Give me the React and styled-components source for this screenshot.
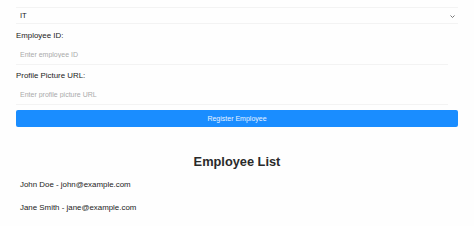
import React from "react";
import styled, { createGlobalStyle } from "styled-components";

const GlobalStyle = createGlobalStyle`
  * { box-sizing: border-box; }
  body {
    margin: 0;
    background: #fefefe;
    font-family: "Liberation Sans", Arial, sans-serif;
    color: #222;
  }
`;

const Page = styled.div`
  width: 474px;
  height: 226px;
  padding: 7px 16px 0 16px;
  overflow: hidden;
`;

const Form = styled.form`
  display: flex;
  flex-direction: column;
`;

const SelectBox = styled.div`
  position: relative;
  width: 442px;
  height: 17px;
  border-top: 1px solid #f3f3f3;
  border-bottom: 1px solid #f3f3f3;
  display: flex;
  align-items: center;
  padding-left: 4px;
  font-size: 7.6px;
  color: #222;
`;

const Caret = styled.svg`
  position: absolute;
  right: 3px;
  top: 7px;
  width: 5px;
  height: 3px;
`;

const Label = styled.label`
  font-size: 7.9px;
  color: #222;
  height: 12px;
  line-height: 12px;
  margin-top: ${(p) => p.top}px;
`;

const Input = styled.input`
  width: 432px;
  height: 20px;
  margin-top: 3px;
  border: none;
  border-bottom: 1px solid #f3f3f3;
  background: transparent;
  padding: 0 4px;
  font-family: "Liberation Sans", Arial, sans-serif;
  font-size: 7px;
  outline: none;
  &::placeholder { color: #aaa; }
`;

const Button = styled.button`
  width: 442px;
  height: 17px;
  margin-top: 5px;
  border: none;
  border-radius: 2px;
  background: #1a8dff;
  color: #e8f3ff;
  font-family: "Liberation Sans", Arial, sans-serif;
  font-size: 7px;
  padding: 0;
`;

const ListTitle = styled.h2`
  margin: 27px 0 0 0;
  height: 16px;
  line-height: 16px;
  text-align: center;
  font-size: 12.8px;
  font-weight: bold;
  color: #2a2a2a;
`;

const List = styled.ul`
  list-style: none;
  margin: 10px 0 0 0;
  padding: 0 0 0 4px;
  display: flex;
  flex-direction: column;
  gap: 13px;
`;

const Item = styled.li`
  font-size: 7.9px;
  height: 10px;
  line-height: 10px;
  color: #222;
`;

const employees = [
  { name: "John Doe", email: "john@example.com" },
  { name: "Jane Smith", email: "jane@example.com" },
];

export default function App() {
  return (
    <Page>
      <GlobalStyle />
      <Form onSubmit={(e) => e.preventDefault()}>
        <SelectBox>
          IT
          <Caret viewBox="0 0 5 3">
            <path d="M0.5 0.5 L2.5 2.5 L4.5 0.5" fill="none" stroke="#666" strokeWidth="0.9" />
          </Caret>
        </SelectBox>
        <Label top={6}>Employee ID:</Label>
        <Input placeholder="Enter employee ID" />
        <Label top={5}>Profile Picture URL:</Label>
        <Input placeholder="Enter profile picture URL" />
        <Button type="submit">Register Employee</Button>
      </Form>
      <ListTitle>Employee List</ListTitle>
      <List>
        {employees.map((emp) => (
          <Item key={emp.email}>
            {emp.name} - {emp.email}
          </Item>
        ))}
      </List>
    </Page>
  );
}
